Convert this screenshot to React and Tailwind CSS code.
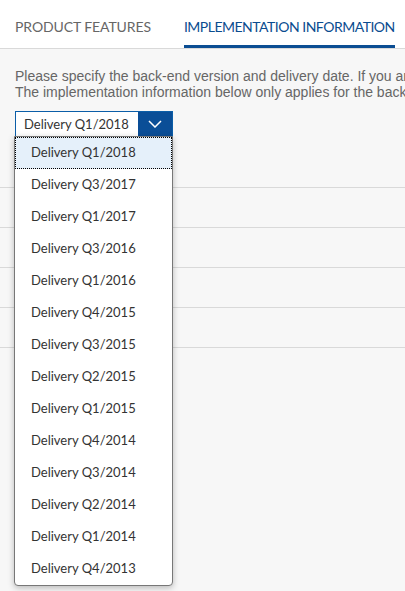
import React, { useState } from 'react';

const DELIVERIES = [
    'Q1/2018',
    'Q3/2017',
    'Q1/2017',
    'Q3/2016',
    'Q1/2016',
    'Q4/2015',
    'Q3/2015',
    'Q2/2015',
    'Q1/2015',
    'Q4/2014',
    'Q3/2014',
    'Q2/2014',
    'Q1/2014',
    'Q4/2013',
];

const font72 = { fontFamily: 'Lato, "Open Sans", sans-serif' };

export default function App() {
    const [selected, setSelected] = useState(DELIVERIES[0]);

    return (
        <div className="w-[405px] h-[591px] overflow-hidden bg-[#f7f7f7] relative" style={font72}>
            {/* tabs */}
            <div className="h-[49px] bg-white border-b border-[#d9d9d9] flex pl-[15px] gap-[33px] text-[14px] whitespace-nowrap">
                <div className="pt-[16px] text-[#666] tracking-[-0.1px]">PRODUCT FEATURES</div>
                <div className="pt-[16px] text-[#0a4c8f] border-b-[3px] border-[#0b4e93] h-[48px] tracking-[-0.5px]">
                    IMPLEMENTATION INFORMATION
                </div>
            </div>

            <div className="pl-[15px] pt-[19px]">
                <p className="text-[14px] leading-[16px] text-[#666] whitespace-nowrap font-['Liberation_Sans',Arial,sans-serif]">
                    Please specify the back-end version and delivery date. If you are using an older release, please select it from the list.
                    <br />
                    The implementation information below only applies for the back-end version selected.
                </p>

                <div className="relative mt-[11px] w-[158px]">
                    <div className="flex h-[26px] border border-[#0b5ea8] bg-white">
                        <div className="flex-1 pl-[8px] text-[13px] leading-[24px] text-[#333]">
                            Delivery {selected}
                        </div>
                        <div className="w-[34px] bg-[#0a4e97] flex items-center justify-center">
                            <svg width="14" height="8" viewBox="0 0 14 8" fill="none">
                                <path d="M1 1l6 6 6-6" stroke="white" strokeWidth="1.5" />
                            </svg>
                        </div>
                    </div>

                    {/* list */}
                    <div className="absolute z-10 left-[-1px] top-[25px] w-[159px] bg-white border border-[#777] rounded-b-[4px] shadow-[0_2px_6px_rgba(0,0,0,0.25)]">
                        {DELIVERIES.map((d, i) => (
                            <div
                                key={d}
                                onClick={() => setSelected(d)}
                                className={
                                    i === 0
                                        ? 'h-[32px] pl-[15px] flex items-center text-[13px] text-[#333] bg-[#e5f0fa] border border-dotted border-black'
                                        : 'h-[32px] pl-[16px] flex items-center text-[13px] text-[#333]'
                                }
                            >
                                Delivery {d}
                            </div>
                        ))}
                    </div>
                </div>
            </div>

            {/* rows behind the list */}
            <div className="mt-[50px]">
                {[0, 1, 2, 3, 4].map((r) => (
                    <div key={r} className="h-[40px] border-t border-[#d9d9d9]" />
                ))}
            </div>
        </div>
    );
}
